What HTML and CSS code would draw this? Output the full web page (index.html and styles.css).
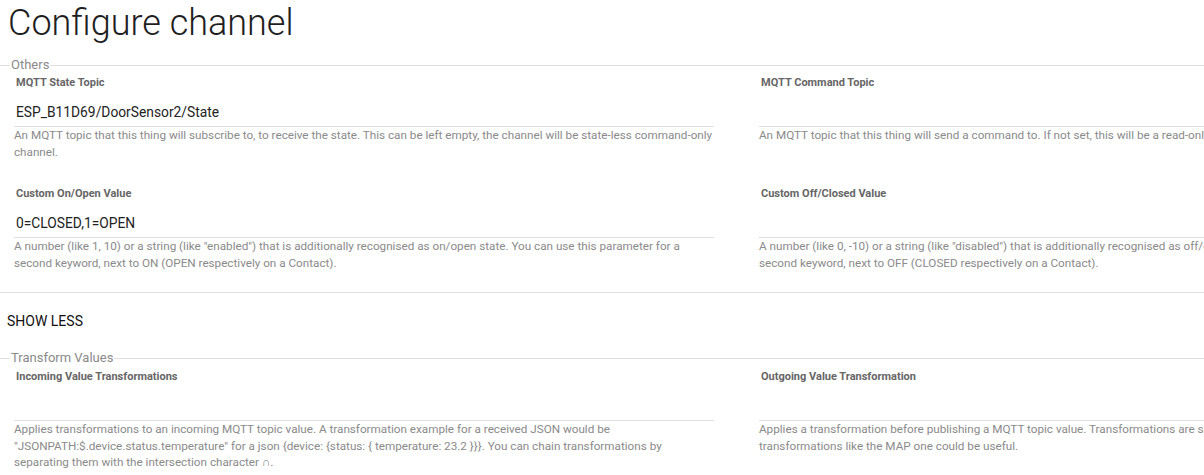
FILE: index.html
```html
<!DOCTYPE html>
<html lang="en">
<head>
<meta charset="utf-8">
<title>Configure channel</title>
<link rel="stylesheet" href="styles.css">
</head>
<body>
<main class="page">
  <h1 class="title">Configure channel</h1>

  <section class="group">
    <div class="group-head"><span class="group-name">Others</span></div>
    <div class="grid">
      <div class="field">
        <div class="label">MQTT State Topic</div>
        <div class="input">ESP_B11D69/DoorSensor2/State</div>
        <p class="desc">An MQTT topic that this thing will subscribe to, to receive the state. This can be left empty, the channel will be state-less command-only<br>channel.</p>
      </div>
      <div class="field">
        <div class="label">MQTT Command Topic</div>
        <div class="input"></div>
        <p class="desc">An MQTT topic that this thing will send a command to. If not set, this will be a read-only channel.</p>
      </div>
      <div class="field">
        <div class="label">Custom On/Open Value</div>
        <div class="input">0=CLOSED,1=OPEN</div>
        <p class="desc">A number (like 1, 10) or a string (like "enabled") that is additionally recognised as on/open state. You can use this parameter for a<br>second keyword, next to ON (OPEN respectively on a Contact).</p>
      </div>
      <div class="field">
        <div class="label">Custom Off/Closed Value</div>
        <div class="input"></div>
        <p class="desc">A number (like 0, -10) or a string (like "disabled") that is additionally recognised as off/closed state. You can use this parameter for a<br>second keyword, next to OFF (CLOSED respectively on a Contact).</p>
      </div>
    </div>
  </section>

  <hr class="divider">

  <button class="toggle" type="button">SHOW LESS</button>

  <section class="group">
    <div class="group-head"><span class="group-name">Transform Values</span></div>
    <div class="grid">
      <div class="field">
        <div class="label">Incoming Value Transformations</div>
        <div class="input"></div>
        <p class="desc">Applies transformations to an incoming MQTT topic value. A transformation example for a received JSON would be<br>"JSONPATH:$.device.status.temperature" for a json {device: {status: { temperature: 23.2 }}}. You can chain transformations by<br>separating them with the intersection character ∩.</p>
      </div>
      <div class="field">
        <div class="label">Outgoing Value Transformation</div>
        <div class="input"></div>
        <p class="desc">Applies a transformation before publishing a MQTT topic value. Transformations are specialised in extracting a value, but some<br>transformations like the MAP one could be useful.</p>
      </div>
    </div>
  </section>
</main>
</body>
</html>
```

FILE: styles.css
```css
html, body {
  margin: 0;
  padding: 0;
  background: #ffffff;
}

body {
  width: 1204px;
  height: 475px;
  overflow: hidden;
  font-family: Roboto, "Liberation Sans", Arial, sans-serif;
  color: #333333;
}

.page {
  width: 1600px;
}

.title {
  margin: 2px 0 0 8px;
  font-family: Roboto, "Liberation Sans", sans-serif;
  font-weight: 300;
  font-size: 36px;
  line-height: 43px;
  color: #1e1e1e;
}

.group {
  margin-top: 12px;
}

.group-head {
  display: flex;
  align-items: center;
  height: 16px;
}

.group-head::before {
  content: "";
  width: 10px;
  border-top: 1px solid #e0e0e0;
}

.group-head::after {
  content: "";
  flex: 1;
  border-top: 1px solid #e0e0e0;
}

.group-name {
  font-size: 13px;
  line-height: 16px;
  color: #8a8a8a;
  padding: 0 1px;
}

.grid {
  display: grid;
  grid-template-columns: 700px 700px;
  column-gap: 45px;
  row-gap: 27px;
  padding: 3px 0 0 14px;
}

.field {
  display: flex;
  flex-direction: column;
}

.label {
  padding-left: 2px;
  font-size: 11px;
  font-weight: 700;
  line-height: 14px;
  color: #666666;
}

.input {
  height: 20px;
  padding: 12px 0 4px 2px;
  border-bottom: 1px solid #e0e0e0;
  font-size: 13.8px;
  line-height: 20px;
  color: #222222;
}

.desc {
  margin: 0;
  font-size: 11.7px;
  line-height: 16.5px;
  color: #8a8a8a;
  white-space: nowrap;
}

.divider {
  margin: 21px 0 0 0;
  border: 0;
  border-top: 1px solid #e0e0e0;
  height: 0;
}

.toggle {
  display: block;
  margin: 19px 0 0 0;
  padding: 0 7px;
  border: 0;
  background: transparent;
  font-family: Roboto, "Liberation Sans", sans-serif;
  font-size: 14px;
  font-weight: 400;
  line-height: 18px;
  color: #111111;
}

.toggle + .group {
  margin-top: 20px;
}

.toggle + .group .grid {
  padding-top: 4px;
}
```
